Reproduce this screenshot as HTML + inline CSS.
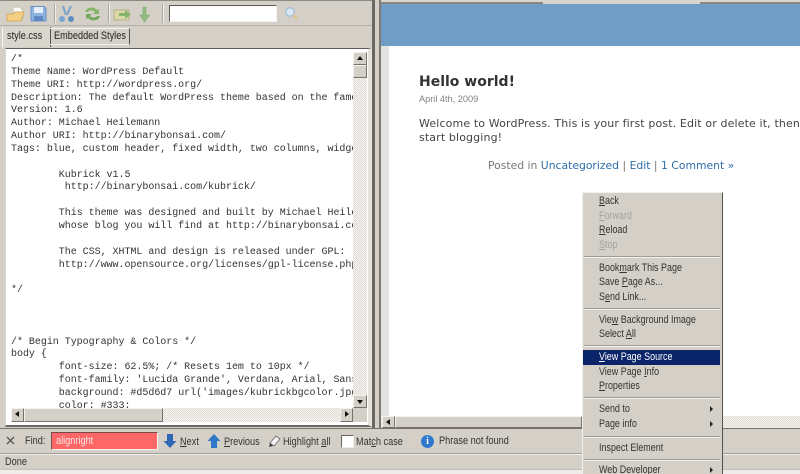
<!DOCTYPE html>
<html><head><meta charset="utf-8"><style>
html,body{margin:0;padding:0;width:800px;height:474px;overflow:hidden;background:#d4d0c8}
body{position:relative;font-family:"Liberation Sans",sans-serif;font-size:10.5px;color:#333}
div,span.a,svg{position:absolute}
.t{white-space:nowrap}
.u{font-size:11.2px;transform:scaleX(.82);transform-origin:0 0}
.dither{background-color:#eeece8;background-image:conic-gradient(#dedbd5 25%,#f6f5f2 0 50%,#dedbd5 0 75%,#f6f5f2 0);background-size:2px 2px}
.btn{background:#d4d0c8;border:1px solid;border-color:#f4f3ef #77736c #77736c #f4f3ef;box-sizing:border-box}
.code{left:11px;top:54px;font:10px/12.85px "Liberation Mono",monospace;letter-spacing:-.03px;color:#333;white-space:pre;width:342px;height:354px;overflow:hidden}
.m{left:599px;white-space:nowrap;color:#333;font-size:11.2px;line-height:14px;transform:scaleX(.8);transform-origin:0 0}
.dis{color:#a5a29b}
.sep{left:584px;width:136px;height:1px;background:#a09d96;border-bottom:1px solid #f2f1ed}
u{text-decoration:underline}
.arrow{width:0;height:0;border-style:solid}
svg.ic{filter:blur(.35px)}
</style></head><body>

<!-- left toolbar -->
<div style="left:0;top:0;width:372px;height:1px;background:#8c8983"></div>
<svg class="ic" style="left:5px;top:4px" width="160" height="20" viewBox="0 0 160 20">
<path d="M8 3h7l3 3v9H8z" fill="#fbfbf6" stroke="#c4c0ae"/><path d="M2 10h6l2-2h9l-3 9H2z" fill="#f3cf86" stroke="#d4ac62"/>
<path d="M26 2.500h13l2 2V17H26z" fill="#8db2e0" stroke="#6a92c8"/><rect x="29" y="3" width="9" height="6" fill="#e6eef8"/><rect x="29" y="12" width="9" height="5" fill="#5d88c2"/>
<path d="M66 2l-4 9M58 2l3 9" stroke="#7ea2c6" stroke-width="2" fill="none"/><circle cx="57" cy="15" r="3" fill="#7ba5cf"/><circle cx="66" cy="15" r="3" fill="#5f8dbd"/>
<path d="M80 8c1-5 9-6 12-2l2-1v5h-6l2-2c-2-2-6-2-7 0z" fill="#85b86c"/><path d="M95 12c-1 5-9 6-12 2l-2 1v-5h6l-2 2c2 2 6 2 7 0z" fill="#75aa5e"/>
<rect x="109" y="6" width="15" height="10" fill="#dbd7a8" stroke="#b5b085"/><path d="M114 9h6V6l6 4.500-6 4.500v-3h-6z" fill="#86b46a"/>
<path d="M138 3h3v8h3.500L139.500 18 135 11h3z" fill="#8fbc7e" stroke="#7aa96a" stroke-width=".6"/>
</svg>
<div style="left:54px;top:4px;width:1px;height:19px;background:#aaa69e;border-right:1px solid #f0efea"></div>
<div style="left:108px;top:4px;width:1px;height:19px;background:#aaa69e;border-right:1px solid #f0efea"></div>
<div style="left:162px;top:4px;width:1px;height:19px;background:#aaa69e;border-right:1px solid #f0efea"></div>
<div style="left:169px;top:5px;width:108px;height:17px;box-sizing:border-box;background:#fff;border:1px solid;border-color:#5c5a55 #f4f3ef #f4f3ef #5c5a55"></div>
<svg class="ic" style="left:284px;top:6px" width="16" height="16"><circle cx="6" cy="6" r="4.200" fill="#dce9f5" stroke="#a3bfdb" stroke-width="1.400"/><path d="M9 9l4 4" stroke="#e0c090" stroke-width="2.400"/></svg>
<div style="left:0;top:25px;width:372px;height:1px;background:#b4b0a8"></div>

<!-- tabs -->
<div style="left:2px;top:27px;width:47px;height:20px;background:#d9d6ce;border-left:1px solid #f5f4f0;border-right:1px solid #55534e"></div>
<div class="t u" style="left:7px;top:29px;line-height:14px;color:#222">style.css</div>
<div style="left:50px;top:28px;width:79px;height:15px;border-top:1px solid #f5f4f0;border-right:1px solid #55534e;border-bottom:1px solid #f0efea"></div>
<div class="t u" style="left:54px;top:29px;line-height:14px;color:#222">Embedded Styles</div>

<!-- editor frame -->
<div style="left:5px;top:48px;width:367px;height:379px;box-sizing:border-box;background:#fff;border-top:1px solid #5f5d58;border-left:1px solid #d8d6d0;border-bottom:2px solid #6a6863;border-right:4px solid #e4e2dc"></div>
<div class="code">/*
Theme Name: WordPress Default
Theme URI: http://wordpress.org/
Description: The default WordPress theme based on the famous Kubrick.
Version: 1.6
Author: Michael Heilemann
Author URI: http://binarybonsai.com/
Tags: blue, custom header, fixed width, two columns, widgets

	Kubrick v1.5
	 http://binarybonsai.com/kubrick/

	This theme was designed and built by Michael Heilemann,
	whose blog you will find at http://binarybonsai.com/

	The CSS, XHTML and design is released under GPL:
	http://www.opensource.org/licenses/gpl-license.php

*/



/* Begin Typography &amp; Colors */
body {
	font-size: 62.5%; /* Resets 1em to 10px */
	font-family: 'Lucida Grande', Verdana, Arial, Sans-Serif;
	background: #d5d6d7 url('images/kubrickbgcolor.jpg');
	color: #333;</div>

<!-- editor v scroll -->
<div class="dither" style="left:353px;top:52px;width:14px;height:356px"></div>
<div class="btn" style="left:353px;top:52px;width:14px;height:13px"></div>
<div class="arrow" style="left:357px;top:56px;border-width:0 3.500px 4px;border-color:transparent transparent #111"></div>
<div class="btn" style="left:353px;top:65px;width:14px;height:13px"></div>
<div class="btn" style="left:353px;top:395px;width:14px;height:13px"></div>
<div class="arrow" style="left:357px;top:400px;border-width:4px 3.500px 0;border-color:#111 transparent transparent"></div>
<!-- editor h scroll -->
<div class="dither" style="left:11px;top:408px;width:342px;height:14px"></div>
<div class="btn" style="left:11px;top:408px;width:13px;height:14px"></div>
<div class="arrow" style="left:15px;top:411px;border-width:3.500px 4px 3.500px 0;border-color:transparent #111 transparent transparent"></div>
<div class="btn" style="left:24px;top:408px;width:139px;height:14px"></div>
<div class="btn" style="left:340px;top:408px;width:13px;height:14px"></div>
<div class="arrow" style="left:345px;top:411px;border-width:3.500px 0 3.500px 4px;border-color:transparent transparent transparent #111"></div>
<div style="left:353px;top:408px;width:14px;height:14px;background:#d4d0c8"></div>

<!-- splitter -->
<div style="left:372px;top:0;width:3px;height:428px;background:#6a6863"></div>
<div style="left:375px;top:0;width:4px;height:428px;background:#d4d0c8"></div>
<div style="left:379px;top:0;width:2px;height:428px;background:#7d7a74"></div>

<!-- browser -->
<div style="left:381px;top:0;width:419px;height:4px;background:#d8d5cd"></div>
<div style="left:381px;top:2px;width:162px;height:2px;background:#8a8780"></div>
<div style="left:700px;top:2px;width:100px;height:2px;background:#8a8780"></div>
<div style="left:381px;top:4px;width:419px;height:42px;background:#6f9dc6"></div>
<div style="left:381px;top:46px;width:419px;height:370px;background:#fff"></div>
<div style="left:381px;top:46px;width:8px;height:370px;background:#e3e3e1"></div>

<div class="t" style="left:419px;top:73px;font:bold 14px/18px 'DejaVu Sans',sans-serif;color:#333">Hello world!</div>
<div class="t" style="left:419px;top:94px;font-size:9.200px;line-height:11px;color:#808080">April 4th, 2009</div>
<div class="t" style="left:419px;top:117px;font:11px/14px 'DejaVu Sans',sans-serif;letter-spacing:.13px;color:#444;width:381px;overflow:hidden">Welcome to WordPress. This is your first post. Edit or delete it, then<br>start blogging!</div>
<div class="t" style="left:488px;top:159px;font:10.800px/14px 'DejaVu Sans',sans-serif;color:#777">Posted in <span style="color:#2f6da8">Uncategorized</span> | <span style="color:#2f6da8">Edit</span> | <span style="color:#2f6da8">1 Comment »</span></div>

<!-- browser h scroll -->
<div class="dither" style="left:381px;top:416px;width:419px;height:13px"></div>
<div class="btn" style="left:382px;top:416px;width:13px;height:12px"></div>
<div class="arrow" style="left:386px;top:419px;border-width:3px 4px 3px 0;border-color:transparent #111 transparent transparent"></div>
<div class="btn" style="left:395px;top:416px;width:187px;height:12px"></div>

<!-- find bar -->
<div style="left:0;top:428px;width:800px;height:1px;background:#77736c"></div>
<div style="left:0;top:429px;width:800px;height:24px;background:#d4d0c8"></div>
<svg style="left:6px;top:436px" width="9" height="9"><path d="M1 1l7 7M8 1l-7 7" stroke="#444" stroke-width="1.200"/></svg>
<div class="t u" style="left:25px;top:434px;line-height:14px;color:#333">Find:</div>
<div style="left:51px;top:432px;width:107px;height:18px;box-sizing:border-box;background:#ff6666;border:1px solid;border-color:#7a4a48 #f4f3ef #f4f3ef #7a4a48"></div>
<div class="t u" style="left:56px;top:434px;line-height:14px;color:#ffe8e8">alignright</div>
<svg class="ic" style="left:163px;top:433px" width="14" height="16"><path d="M4 1h6v7h3.500L7 15 .5 8H4z" fill="#2e67b8"/></svg>
<div class="t u" style="left:180px;top:435px;line-height:14px"><u>N</u>ext</div>
<svg class="ic" style="left:207px;top:433px" width="14" height="16"><path d="M4 15h6V8h3.500L7 1 .5 8H4z" fill="#2e78c8"/></svg>
<div class="t u" style="left:224px;top:435px;line-height:14px"><u>P</u>revious</div>
<svg class="ic" style="left:267px;top:434px" width="14" height="15"><path d="M3 9l6-7 4 3-6 7z" fill="#f4f4f2" stroke="#666" stroke-width=".8"/><path d="M3 9l-1 4 4-1z" fill="#444"/></svg>
<div class="t u" style="left:283px;top:435px;line-height:14px">Highlight <u>a</u>ll</div>
<div style="left:341px;top:435px;width:13px;height:13px;box-sizing:border-box;background:#fff;border:1px solid;border-color:#66645e #eeeeea #eeeeea #66645e"></div>
<div class="t u" style="left:356px;top:435px;line-height:14px">Mat<u>c</u>h case</div>
<div style="left:421px;top:435px;width:13px;height:13px;border-radius:50%;background:#2e78cf"></div>
<div class="t" style="left:421px;top:435px;width:13px;text-align:center;font:bold 10px/13px 'Liberation Serif',serif;color:#fff">i</div>
<div class="t u" style="left:439px;top:434px;line-height:14px">Phrase not found</div>

<!-- status -->
<div style="left:0;top:453px;width:800px;height:1px;background:#a29f98"></div>
<div style="left:0;top:454px;width:800px;height:1px;background:#f0efeb"></div>
<div class="t u" style="left:5px;top:455px;line-height:14px">Done</div>
<div style="left:0;top:469px;width:800px;height:1px;background:#c4c1ba"></div>
<div style="left:0;top:470px;width:800px;height:4px;background:#eeece8"></div>

<!-- context menu -->
<div style="left:582px;top:192px;width:139px;height:282px;background:#d4d0c8;border-top:1px solid #f2f1ed;border-left:1px solid #f2f1ed;border-right:1px solid #55534e"></div>
<div class="m" style="top:194px"><u>B</u>ack</div>
<div class="m dis" style="top:209px"><u>F</u>orward</div>
<div class="m" style="top:223px"><u>R</u>eload</div>
<div class="m dis" style="top:238px"><u>S</u>top</div>
<div class="sep" style="top:256px"></div>
<div class="m" style="top:261px">Book<u>m</u>ark This Page</div>
<div class="m" style="top:275px">Save <u>P</u>age As...</div>
<div class="m" style="top:290px">S<u>e</u>nd Link...</div>
<div class="sep" style="top:308px"></div>
<div class="m" style="top:313px">Vie<u>w</u> Background Image</div>
<div class="m" style="top:327px">Select <u>A</u>ll</div>
<div class="sep" style="top:345px"></div>
<div style="left:583px;top:350px;width:137px;height:15px;background:#0a246a"></div>
<div class="m" style="top:350px;color:#fff"><u>V</u>iew Page Source</div>
<div class="m" style="top:365px">View Page <u>I</u>nfo</div>
<div class="m" style="top:379px"><u>P</u>roperties</div>
<div class="sep" style="top:397px"></div>
<div class="m" style="top:402px">Send to</div>
<div class="arrow" style="left:710px;top:406px;border-width:3px 0 3px 3.500px;border-color:transparent transparent transparent #222"></div>
<div class="m" style="top:417px">Page info</div>
<div class="arrow" style="left:710px;top:421px;border-width:3px 0 3px 3.500px;border-color:transparent transparent transparent #222"></div>
<div class="sep" style="top:436px"></div>
<div class="m" style="top:441px">Inspect Element</div>
<div class="sep" style="top:459px"></div>
<div class="m" style="top:463px">Web Developer</div>
<div class="arrow" style="left:710px;top:467px;border-width:3px 0 3px 3.500px;border-color:transparent transparent transparent #222"></div>
</body></html>
